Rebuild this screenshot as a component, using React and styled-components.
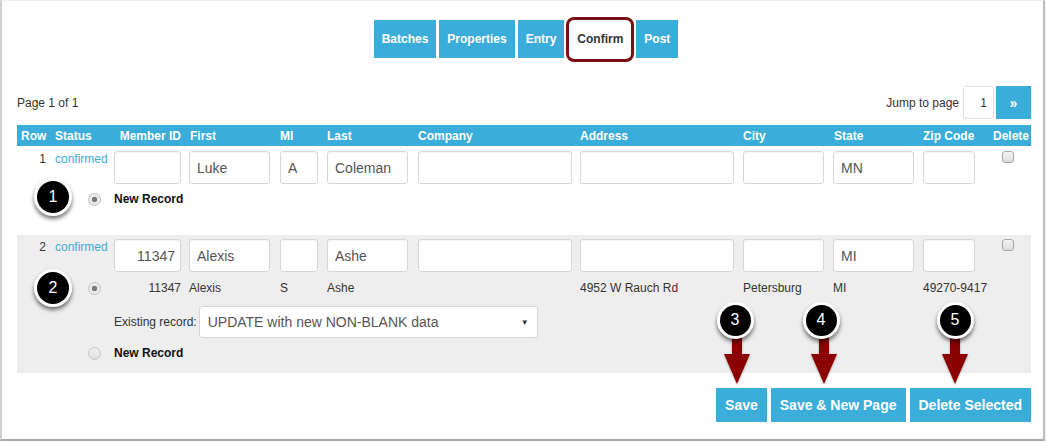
import React from "react";
import styled, { createGlobalStyle, css } from "styled-components";

const BLUE = "#3badda";
const COLS = "34px 63px 75px 91px 47px 91px 162px 163px 90px 90px 66px 42px";

const GlobalStyle = createGlobalStyle`
  * { box-sizing: border-box; }
  html, body { margin: 0; padding: 0; background: #fff; }
  body {
    font-family: "Liberation Sans", Arial, sans-serif;
    font-size: 12px;
    color: #333;
  }
`;

const columns = [
  { key: "row", label: "Row", pad: "0 0 0 4px" },
  { key: "status", label: "Status", pad: "0 0 0 4px" },
  { key: "member", label: "Member ID", pad: "0 8px 0 0", align: "right", w: 67 },
  { key: "first", label: "First", pad: "0 0 0 1px", w: 81 },
  { key: "mi", label: "MI", w: 38 },
  { key: "last", label: "Last", w: 81 },
  { key: "company", label: "Company", w: 154 },
  { key: "address", label: "Address", w: 154 },
  { key: "city", label: "City", w: 81 },
  { key: "state", label: "State", pad: "0 0 0 1px", w: 81 },
  { key: "zip", label: "Zip Code", w: 52 },
  { key: "delete", label: "Delete", pad: "0 0 0 4px" },
];

const records = [
  {
    row: 1,
    values: { member: "", first: "Luke", mi: "A", last: "Coleman", company: "", address: "", city: "", state: "MN", zip: "" },
  },
  {
    row: 2,
    values: { member: "11347", first: "Alexis", mi: "", last: "Ashe", company: "", address: "", city: "", state: "MI", zip: "" },
    existing: { member: "11347", first: "Alexis", mi: "S", last: "Ashe", company: "", address: "4952 W Rauch Rd", city: "Petersburg", state: "MI", zip: "49270-9417" },
  },
];

const callouts = [
  { n: 1, x: 53, y: 197, d: 38 },
  { n: 2, x: 53, y: 288, d: 38 },
  { n: 3, x: 735, y: 320, d: 37, arrow: 737 },
  { n: 4, x: 821, y: 320, d: 37, arrow: 824 },
  { n: 5, x: 955, y: 320, d: 37, arrow: 955 },
];

function App() {
  return (
    <>
      <GlobalStyle />
      <Frame>
        <Tabs>
          <Tab>Batches</Tab>
          <Tab>Properties</Tab>
          <Tab>Entry</Tab>
          <Tab $active>Confirm</Tab>
          <Tab>Post</Tab>
        </Tabs>

        <Pager>
          <PageInfo>Page 1 of 1</PageInfo>
          <Jump>
            <JumpLabel>Jump to page</JumpLabel>
            <JumpInput defaultValue="1" />
            <JumpButton>»</JumpButton>
          </Jump>
        </Pager>

        <HeaderRow>
          {columns.map((c) => (
            <HeadCell key={c.key} $pad={c.pad} $align={c.align}>
              {c.label}
            </HeadCell>
          ))}
        </HeaderRow>

        {records.map((r) => (
          <Record key={r.row} $shaded={r.row % 2 === 0}>
            <MainLine>
              <RowNum>{r.row}</RowNum>
              <StatusLink>confirmed</StatusLink>
              {columns
                .filter((c) => c.w)
                .map((c) => (
                  <InputCell key={c.key}>
                    <TextInput
                      $w={c.w}
                      $right={c.key === "member"}
                      defaultValue={r.values[c.key]}
                    />
                  </InputCell>
                ))}
              <CheckCell>
                <Checkbox />
              </CheckCell>
            </MainLine>

            {r.existing && (
              <>
                <SubLine>
                  <span />
                  <RadioCell>
                    <Radio $checked />
                  </RadioCell>
                  {columns
                    .filter((c) => c.w)
                    .map((c) => (
                      <DataCell key={c.key} $right={c.key === "member"}>
                        {r.existing[c.key]}
                      </DataCell>
                    ))}
                </SubLine>
                <ExistingLine>
                  <ExistingLabel>Existing record:</ExistingLabel>
                  <SelectBox>
                    <span>UPDATE with new NON-BLANK data</span>
                    <Caret>▼</Caret>
                  </SelectBox>
                </ExistingLine>
              </>
            )}

            <SubLine $last>
              <span />
              <RadioCell>
                <Radio $checked={!r.existing} />
              </RadioCell>
              <NewRecord>New Record</NewRecord>
            </SubLine>
          </Record>
        ))}

        <Actions>
          <ActionButton>Save</ActionButton>
          <ActionButton>Save &amp; New Page</ActionButton>
          <ActionButton>Delete Selected</ActionButton>
        </Actions>

        {callouts.map((c) => (
          <React.Fragment key={c.n}>
            {c.arrow && (
              <Arrow
                width="26"
                height="50"
                viewBox="0 0 26 50"
                style={{ left: c.arrow - 13 - 2, top: 334 }}
              >
                <rect x="8" y="0" width="10" height="21" fill="#8b0000" />
                <polygon points="0,19 26,19 13,49" fill="#8b0000" />
              </Arrow>
            )}
            <Callout
              $d={c.d}
              style={{ left: c.x - c.d / 2 - 2, top: c.y - c.d / 2 - 1 }}
            >
              {c.n}
            </Callout>
          </React.Fragment>
        ))}
      </Frame>
    </>
  );
}

export default App;

const Frame = styled.div`
  position: relative;
  width: 1045px;
  height: 441px;
  border-top: 1px solid #eee;
  border-left: 2px solid #cfcfcf;
  border-right: 2px solid #bdbdbd;
  border-bottom: 2px solid #a8a8a8;
  box-shadow: 0 1px 2px rgba(0, 0, 0, 0.15);
  padding: 19px 12px 0 15px;
`;

const Tabs = styled.div`
  display: flex;
  justify-content: center;
  gap: 3px;
  padding-left: 4px;
`;

const Tab = styled.div`
  position: relative;
  height: 38px;
  padding: 0 8px;
  display: flex;
  align-items: center;
  font-weight: bold;
  font-size: 12px;
  color: #fff;
  background: ${BLUE};
  ${(p) =>
    p.$active &&
    css`
      background: #fff;
      color: #333;
      margin: 0 2px;
      &::after {
        content: "";
        position: absolute;
        inset: -3px -3px -4px -3px;
        border: 3px solid #7a1015;
        border-radius: 8px;
      }
    `}
`;

const Pager = styled.div`
  display: flex;
  justify-content: space-between;
  align-items: center;
  margin-top: 28px;
  height: 33px;
`;

const PageInfo = styled.div`
  font-size: 12px;
  color: #333;
`;

const Jump = styled.div`
  display: flex;
  align-items: center;
  height: 33px;
`;

const JumpLabel = styled.span`
  margin-right: 4px;
  font-size: 12px;
`;

const JumpInput = styled.input`
  width: 31px;
  height: 33px;
  border: 1px solid #ddd;
  border-radius: 3px;
  padding: 0 6px;
  text-align: right;
  font: 12px "Liberation Sans", Arial, sans-serif;
  color: #333;
  margin-right: 2px;
`;

const JumpButton = styled.button`
  width: 35px;
  height: 33px;
  border: none;
  background: ${BLUE};
  color: #fff;
  font: bold 14px "Liberation Sans", Arial, sans-serif;
  padding: 0;
`;

const gridLine = css`
  display: grid;
  grid-template-columns: ${COLS};
`;

const HeaderRow = styled.div`
  ${gridLine};
  margin-top: 6px;
  height: 21px;
  align-items: center;
  background: ${BLUE};
`;

const HeadCell = styled.div`
  padding: ${(p) => p.$pad || "0"};
  text-align: ${(p) => p.$align || "left"};
  color: #fff;
  font-weight: bold;
  font-size: 12px;
  white-space: nowrap;
`;

const Record = styled.div`
  background: ${(p) => (p.$shaded ? "#eeeeee" : "#fff")};
  padding: ${(p) => (p.$shaded ? "4px 0 10px" : "5px 0 26px")};
`;

const MainLine = styled.div`
  ${gridLine};
  align-items: start;
`;

const RowNum = styled.div`
  text-align: right;
  padding: 1px 5px 0 0;
  line-height: 14px;
`;

const StatusLink = styled.div`
  padding: 1px 0 0 4px;
  line-height: 14px;
  color: ${BLUE};
`;

const InputCell = styled.div`
  display: flex;
`;

const TextInput = styled.input`
  width: ${(p) => p.$w}px;
  height: 33px;
  border: 1px solid #d6d6d6;
  border-radius: 3px;
  background: #fff;
  box-shadow: inset 0 1px 1px rgba(0, 0, 0, 0.04);
  padding: ${(p) => (p.$right ? "0 5px 0 4px" : "0 6px 0 7px")};
  text-align: ${(p) => (p.$right ? "right" : "left")};
  font: 14px "Liberation Sans", Arial, sans-serif;
  color: #555;
`;

const CheckCell = styled.div`
  padding-left: 13px;
`;

const Checkbox = styled.div`
  width: 12px;
  height: 12px;
  border: 1px solid #a6a6a6;
  border-radius: 3px;
  background: linear-gradient(#f4f4f4, #dcdcdc);
`;

const SubLine = styled.div`
  ${gridLine};
  align-items: center;
  height: 20px;
  margin-top: ${(p) => (p.$last ? "5px" : "6px")};
`;

const RadioCell = styled.div`
  display: flex;
  justify-content: flex-end;
  padding-right: 13px;
`;

const Radio = styled.div`
  width: 13px;
  height: 13px;
  border-radius: 50%;
  border: 1px solid #c4c4c4;
  background: ${(p) =>
    p.$checked
      ? "radial-gradient(circle, #7a7a7a 0 2.5px, #e9e9e9 3px)"
      : "linear-gradient(#f2f2f2, #dedede)"};
`;

const DataCell = styled.div`
  text-align: ${(p) => (p.$right ? "right" : "left")};
  padding-right: ${(p) => (p.$right ? "8px" : "0")};
  white-space: nowrap;
  color: #333;
`;

const NewRecord = styled.div`
  grid-column: 3 / -1;
  font-weight: bold;
  color: #111;
`;

const ExistingLine = styled.div`
  display: flex;
  align-items: center;
  margin: 8px 0 0 97px;
  height: 32px;
`;

const ExistingLabel = styled.span`
  margin-right: 2px;
  color: #333;
`;

const SelectBox = styled.div`
  width: 339px;
  height: 32px;
  display: flex;
  align-items: center;
  justify-content: space-between;
  padding: 0 8px 0 8px;
  background: #fff;
  border: 1px solid #d6d6d6;
  border-radius: 3px;
  font-size: 14px;
  color: #555;
`;

const Caret = styled.span`
  font-size: 8px;
  color: #333;
`;

const Actions = styled.div`
  display: flex;
  justify-content: flex-end;
  gap: 4px;
  margin-top: 15px;
`;

const ActionButton = styled.button`
  height: 34px;
  padding: 0 9px;
  border: none;
  background: ${BLUE};
  color: #fff;
  font: bold 14px "Liberation Sans", Arial, sans-serif;
`;

const Callout = styled.div`
  position: absolute;
  width: ${(p) => p.$d}px;
  height: ${(p) => p.$d}px;
  border-radius: 50%;
  background: #000;
  border: 3px solid #fff;
  box-shadow: 0 3px 4px rgba(0, 0, 0, 0.55);
  color: #fff;
  font-size: 16px;
  display: flex;
  align-items: center;
  justify-content: center;
`;

const Arrow = styled.svg`
  position: absolute;
  display: block;
  filter: drop-shadow(0 1px 1px rgba(0, 0, 0, 0.3));
`;
